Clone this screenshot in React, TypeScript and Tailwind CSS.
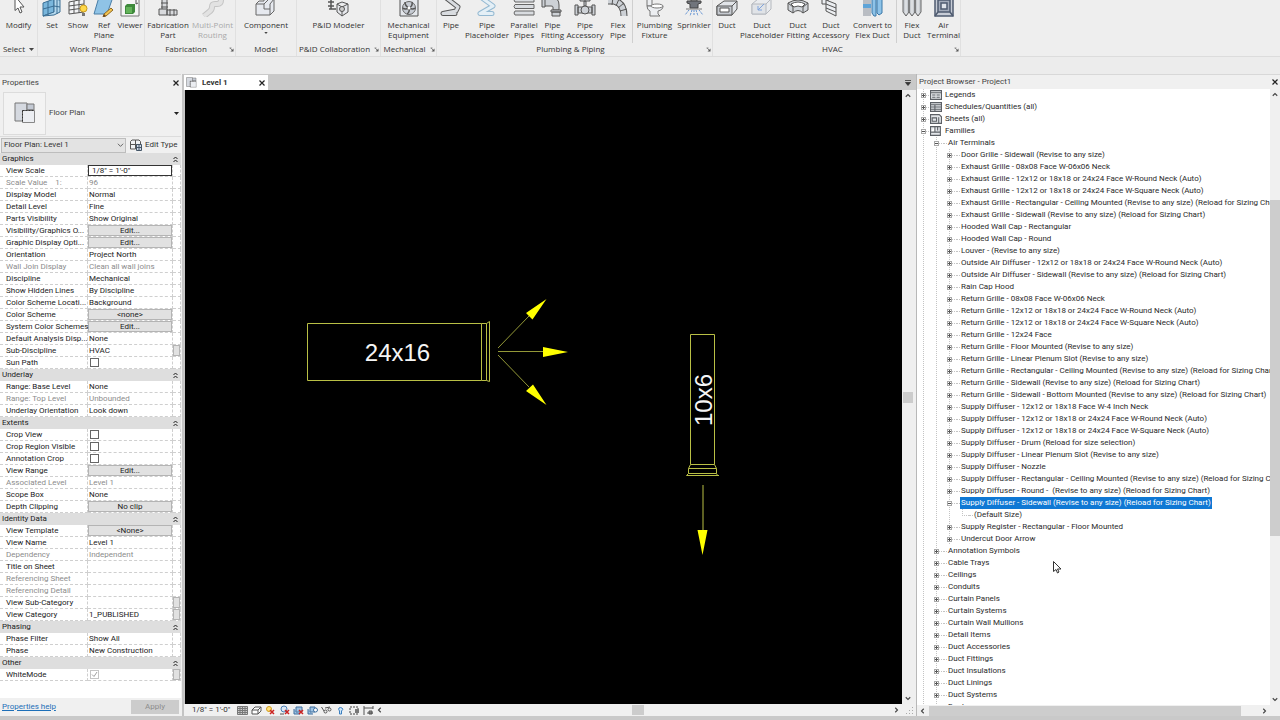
import React from "react";

/* ---------- Ribbon ---------- */

type IconName =
  | "cursor" | "set" | "show" | "refPlane" | "viewer" | "fabPart" | "multiPoint" | "component" | "pid"
  | "mech" | "pipe" | "pipeGhost" | "parallel" | "elbow" | "valve" | "flexPipe" | "toilet" | "sprinkler"
  | "duct" | "ductGhost" | "ductFitting" | "ductAccessory" | "convert" | "flexDuct" | "airTerminal";

const drawings: Record<IconName, React.ReactNode> = {
  cursor: <path d="M8 -4V10.500L11 8l2 5 2-1-2-5h4Z" fill="#fff" stroke="#555" />,
  set: (
    <g stroke="#3a6e94">
      <path d="M3 3 14-1v13L3 16Z" fill="#79b6dc" />
      <path d="M14-1l6 1v12l-6 3-11 1 11-4Z" fill="#b5d9ee" />
      <path d="M3 9l11-3 6 1M8 1v14M17 0v14" fill="none" />
    </g>
  ),
  show: (
    <g>
      <path d="M3 2 18-1v13L3 14Z" fill="#f3f4f6" stroke="#555" />
      <path d="M3 6l15-2M3 10l15-2M8 1v12M13 0v13" fill="none" stroke="#555" />
      <circle cx="17.500" cy="8.500" r="3.500" fill="#ffd84a" stroke="#c89a1c" />
      <path d="M16 13h3v3h-3Z" fill="#777" />
    </g>
  ),
  refPlane: (
    <g>
      <path d="M7-3h14l-6 17H2Z" fill="#8fc3e6" stroke="#4a7ea6" />
      <path d="M12 14 19 8l2 2-7 6-3 1Z" fill="#f4c34e" stroke="#8d6a27" />
      <path d="m12 14 2 2-3 1Z" fill="#6a4522" />
    </g>
  ),
  viewer: (
    <g>
      <path d="M3-2h18v18H3Z" fill="#f5f5f5" stroke="#777" />
      <path d="M7 6l2-2h8v8l-2 2H7Z" fill="#3f8a3c" />
      <path d="M8 7h6v6H8Z" fill="#63b359" />
      <path d="M18-2v6l2-1" stroke="#555" fill="none" />
    </g>
  ),
  fabPart: (
    <g stroke="#555" fill="#d8dadd">
      <path d="M6-2h5v12H6ZM5 3h7M5 7h7" />
      <path d="M3 9h8v6H3ZM11 10h10v5H11ZM14 9v7M18 9v7" />
    </g>
  ),
  multiPoint: (
    <g fill="none">
      <path d="M20-3v3q0 4-4 4h-2q-3 0-3 3t-3 5l-5 4" stroke="#c4c4c4" strokeWidth="6" />
      <path d="M20-3v3q0 4-4 4h-2q-3 0-3 3t-3 5l-5 4" stroke="#e2e2e2" strokeWidth="4" />
    </g>
  ),
  component: (
    <g stroke="#666">
      <path d="M2 4l3-3h5V-3h10v14l-4 4H2Z" fill="#e6e9ef" />
      <path d="M2 4h8l4-4M16 15V4l4-5M10 4v5l6 0" fill="none" />
    </g>
  ),
  pid: (
    <g fill="none" stroke="#555">
      <path d="M4-3v12M1 2h6M1 6h6M2 9h7" strokeWidth="1.500" />
      <path d="m10 4 5-2 6 2v8l-6 4-5-4ZM10 4l5 3 6-3M15 7v9" fill="#e6e8ec" />
      <circle cx="15" cy="9" r="2.500" fill="#ccc" />
    </g>
  ),
  mech: (
    <g>
      <path d="M3-2h18v18H3Z" fill="#e4e7ec" stroke="#555" />
      <circle cx="12" cy="8" r="6.500" fill="#c6cbd3" stroke="#666" />
      <path d="M12 8Q8 6 8 2M12 8q4-2 3-6M12 8q4 2 6 0M12 8q1 4-2 6M12 8q-4 2-6 0" fill="none" stroke="#555" strokeWidth="1.500" />
      <circle cx="12" cy="8" r="1.500" fill="#fff" />
    </g>
  ),
  pipe: (
    <g fill="none" strokeLinecap="round">
      <path d="M6-3 19 7 17 11 4 13.500h12" stroke="#555" strokeWidth="5" strokeLinejoin="round" />
      <path d="M6-3 19 7 17 11 4 13.500h12" stroke="#d9dce0" strokeWidth="3" strokeLinejoin="round" />
    </g>
  ),
  pipeGhost: (
    <g fill="none" strokeLinecap="round">
      <path d="M7-2 18 6 5 13.500h12" stroke="#94b9d2" strokeWidth="5" strokeLinejoin="round" />
      <path d="M7-2 18 6 5 13.500h12" stroke="#e4eff6" strokeWidth="3" strokeLinejoin="round" />
    </g>
  ),
  parallel: (
    <g stroke="#666" fill="#d9dce0">
      <path d="M3-2h19v4H3q-2-2 0-4ZM3 4.500h19v4H3q-2-2 0-4ZM3 11h19v4H3q-2-2 0-4Z" />
    </g>
  ),
  elbow: (
    <g stroke="#555" fill="#cdd1d6">
      <path d="M3-2h9q6 0 6 7v5h-6V7q0-1-2-1H3Z" />
      <path d="M1-3h3V7H1ZM10 10h10v2H10ZM11 12h8v4h-8Z" />
    </g>
  ),
  valve: (
    <g stroke="#555" fill="#cdd1d6">
      <path d="M7-1h10v2H7ZM11 1h2v5h-2Z" />
      <path d="M5 7h14v6H5ZM2 5h3v10H2ZM19 5h3v10h-3Z" />
      <circle cx="12" cy="10" r="4" />
    </g>
  ),
  flexPipe: (
    <g>
      <path d="M2 1h6q10 2 10 15" fill="none" stroke="#555" strokeWidth="7" />
      <path d="M2 1h6q10 2 10 15" fill="none" stroke="#cdd1d6" strokeWidth="5" />
      <path d="M7-3 6 5M13-1l-3 7M18 3l-6 5M21 9l-7 2" stroke="#555" />
    </g>
  ),
  toilet: (
    <g stroke="#777" fill="#eceef1">
      <path d="M4-3h5V6H4Z" />
      <path d="M4 6h16q0 4-5 5v3l2 2H7V11Q4 10 4 6Z" />
      <ellipse cx="14" cy="6" rx="6" ry="2" fill="#fff" />
    </g>
  ),
  sprinkler: (
    <g>
      <path d="M9-3h6v5H9Z" fill="#999" stroke="#444" />
      <path d="M5 1h14v2l-3 1v4H8V4L5 3Z" fill="#71757c" stroke="#444" />
      <path d="M4 9h16" stroke="#777" />
      <path d="M7 10 3 15M10 10l-2 6M12 10v6M14 10l2 6M17 10l4 5" stroke="#5c8ed1" strokeDasharray="2 1" />
    </g>
  ),
  duct: (
    <g stroke="#555">
      <path d="M2 6 9 1h13v8l-5 6H2Z" fill="#e1e4e8" />
      <path d="M2 6h15v9H2ZM17 6l5-5" fill="#c6cad0" />
      <path d="M5 8h9v4H5Z" fill="#fff" />
    </g>
  ),
  ductGhost: (
    <g stroke="#b4b8be">
      <path d="M2 4 8-1h13v10l-5 5H2Z" fill="#e9ebee" />
      <path d="M2 4h14v10H2ZM16 4l5-5" fill="#e0e3e7" />
      <path d="m8 10 6-6M8 6v4h4" stroke="#7fa3dc" fill="none" />
    </g>
  ),
  ductFitting: (
    <g stroke="#555">
      <path d="M2 3Q12-3 22 3v7l-5 3q-5-5-10 0l-5-3Z" fill="#d0d4d9" />
      <path d="M5 4q7-4 14 0l-3 3q-4-2-8 0Z" fill="#fff" />
      <path d="M2 3l5 4v6M22 3l-5 4v6" fill="none" />
    </g>
  ),
  ductAccessory: (
    <g stroke="#555" fill="#eceef1">
      <path d="M3-2h6v6H3Z" />
      <path d="M7 0 17 4v12L7 11ZM7 4l10 4M7 8l10 4" />
    </g>
  ),
  convert: (
    <g>
      <path d="M2-2h8v6H2ZM2 8h8v8H2Z" fill="#b9bdc3" />
      <path d="M2 4h8v4H2Z" fill="#5ea4d8" />
      <path d="M11-3v16l2 3h2V-1Zm5 0v16l2 2 3-2V-3Z" fill="#8ec3e8" stroke="#3b78a8" />
    </g>
  ),
  flexDuct: (
    <g fill="#c9cdd2" stroke="#666">
      <path d="M3-3v15l3 4 3-4V-3ZM9-3v15l3 4 3-4V-3ZM15-3v15l3 4 3-4V-3Z" />
      <path d="M6-3v17M12-3v17M18-3v17" stroke="#eef0f2" />
    </g>
  ),
  airTerminal: (
    <g fill="none" stroke="#4f5b70" strokeWidth="1.500">
      <path d="M3-3h18v19H3Z" fill="#c7ccd6" />
      <path d="M6 0h12v12H6Z" fill="#a3abba" />
      <path d="M9 3h6v6H9Z" fill="#dfe3ea" />
      <path d="m3 16 3-4M21 16l-3-4" />
    </g>
  ),
};

function RibbonIcon({ name }: { name: IconName }) {
  return (
    <svg viewBox="0 0 24 17" className="h-[17px] w-6 shrink-0" aria-hidden="true">
      {drawings[name]}
    </svg>
  );
}

type Tool = { icon: IconName; lines: string[]; w: string; disabled?: boolean; caret?: boolean; divider?: boolean };
type Group = { title: string; w: string; tools: Tool[]; launcher?: boolean; dropdown?: boolean };

const groups: Group[] = [
  { title: "Select", w: "w-[38px]", dropdown: true, tools: [{ icon: "cursor", lines: ["Modify"], w: "w-[37px]" }] },
  {
    title: "Work Plane",
    w: "w-[107px]",
    tools: [
      { icon: "set", lines: ["Set"], w: "w-[26px]" },
      { icon: "show", lines: ["Show"], w: "w-[26px]" },
      { icon: "refPlane", lines: ["Ref", "Plane"], w: "w-[26px]" },
      { icon: "viewer", lines: ["Viewer"], w: "w-[26px]" },
    ],
  },
  {
    title: "Fabrication",
    w: "w-[91px]",
    launcher: true,
    tools: [
      { icon: "fabPart", lines: ["Fabrication", "Part"], w: "w-[45px]" },
      { icon: "multiPoint", lines: ["Multi-Point", "Routing"], w: "w-[44px]", disabled: true },
    ],
  },
  { title: "Model", w: "w-[61px]", tools: [{ icon: "component", lines: ["Component"], w: "w-[50px]", caret: true }] },
  { title: "P&ID Collaboration", w: "w-[84px]", launcher: true, tools: [{ icon: "pid", lines: ["P&ID Modeler"], w: "w-[60px]" }] },
  { title: "Mechanical", w: "w-[56px]", launcher: true, tools: [{ icon: "mech", lines: ["Mechanical", "Equipment"], w: "w-[48px]" }] },
  {
    title: "Plumbing & Piping",
    w: "w-[276px]",
    launcher: true,
    tools: [
      { icon: "pipe", lines: ["Pipe"], w: "w-[28px]" },
      { icon: "pipeGhost", lines: ["Pipe", "Placeholder"], w: "w-[44px]" },
      { icon: "parallel", lines: ["Parallel", "Pipes"], w: "w-[30px]" },
      { icon: "elbow", lines: ["Pipe", "Fitting"], w: "w-[27px]" },
      { icon: "valve", lines: ["Pipe", "Accessory"], w: "w-[38px]" },
      { icon: "flexPipe", lines: ["Flex", "Pipe"], w: "w-[28px]" },
      { icon: "toilet", lines: ["Plumbing", "Fixture"], w: "w-[44px]", divider: true },
      { icon: "sprinkler", lines: ["Sprinkler"], w: "w-[36px]" },
    ],
  },
  {
    title: "HVAC",
    w: "w-[248px]",
    launcher: true,
    tools: [
      { icon: "duct", lines: ["Duct"], w: "w-[27px]" },
      { icon: "ductGhost", lines: ["Duct", "Placeholder"], w: "w-[43px]" },
      { icon: "ductFitting", lines: ["Duct", "Fitting"], w: "w-[29px]" },
      { icon: "ductAccessory", lines: ["Duct", "Accessory"], w: "w-[37px]" },
      { icon: "convert", lines: ["Convert to", "Flex Duct"], w: "w-[46px]" },
      { icon: "flexDuct", lines: ["Flex", "Duct"], w: "w-[32px]", divider: true },
      { icon: "airTerminal", lines: ["Air", "Terminal"], w: "w-[32px]" },
    ],
  },
];

function ToolButton({ tool }: { tool: Tool }) {
  return (
    <button
      type="button"
      disabled={tool.disabled}
      className={`flex h-[43px] shrink-0 flex-col items-center gap-[3px] leading-[10px] whitespace-nowrap ${tool.w} ${
        tool.disabled ? "text-[#a9a9a9]" : "text-[#333]"
      } ${tool.divider ? "border-l border-[#cfcfcf]" : ""}`}
    >
      <RibbonIcon name={tool.icon} />
      <span className="flex flex-col items-center">
        {tool.lines.map((l) => (
          <span key={l}>{l}</span>
        ))}
        {tool.caret && (
          <svg viewBox="0 0 5 3" className="mt-[2px] h-[2px] w-[4px]" aria-hidden="true">
            <path d="M0 0h5L2.500 3Z" fill="#444" />
          </svg>
        )}
      </span>
    </button>
  );
}

function Launcher({ title }: { title: string }) {
  return (
    <button type="button" aria-label={`${title} settings`} className="flex w-[8px] justify-center">
      <svg viewBox="0 0 5 5" className="h-[5px] w-[5px]" aria-hidden="true">
        <path d="M0.500 1h2M1 1l2 2" stroke="#888" fill="none" />
        <path d="M4.500 1.500v3H1.500Z" fill="#555" />
      </svg>
    </button>
  );
}

function Ribbon() {
  return (
    <header className="flex h-[57px] shrink-0 overflow-hidden border-b border-[#dcdcdc] bg-[#eeeeee] font-['Open_Sans','Noto_Sans',sans-serif]">
      {groups.map((g) => (
        <section key={g.title} aria-label={g.title} className={`flex shrink-0 flex-col border-r border-[#e0e0e0] ${g.w}`}>
          <div className="flex justify-center">
            {g.tools.map((t) => (
              <ToolButton key={t.lines.join(" ")} tool={t} />
            ))}
          </div>
          <div className="flex h-[12px] items-center text-[#333]">
            <span className="flex flex-1 items-center justify-center gap-1 whitespace-nowrap">
              {g.title}
              {g.dropdown && (
                <svg viewBox="0 0 5 3" className="h-[3px] w-[5px]" aria-hidden="true">
                  <path d="M0 0h5L2.500 3Z" fill="#444" />
                </svg>
              )}
            </span>
            {g.launcher && <Launcher title={g.title} />}
          </div>
        </section>
      ))}
    </header>
  );
}

/* ---------- Shared bits ---------- */

function CloseButton({ label }: { label: string }) {
  return (
    <button type="button" aria-label={label} className="flex h-[10px] w-[10px] items-center justify-center">
      <svg viewBox="0 0 6 6" className="h-[6px] w-[6px]" aria-hidden="true">
        <path d="m0.500 0.500 5 5M5.500 0.500l-5 5" stroke="#222" strokeWidth="1.200" />
      </svg>
    </button>
  );
}

const arrows = { up: "M1 5 4 2l3 3", down: "M1 3l3 3 3-3", left: "M5 1 2 4l3 3", right: "M3 1l3 3-3 3" };

function ScrollArrow({ dir }: { dir: keyof typeof arrows }) {
  return (
    <button type="button" aria-label={`Scroll ${dir}`} className="flex h-[12px] w-[12px] shrink-0 items-center justify-center">
      <svg viewBox="0 0 8 8" className="h-[6px] w-[6px]" aria-hidden="true">
        <path d={arrows[dir]} stroke="#444" strokeWidth="1.500" fill="none" />
      </svg>
    </button>
  );
}

function FloorPlanIcon({ className }: { className: string }) {
  return (
    <svg viewBox="0 0 22 22" className={className} aria-hidden="true">
      <path d="M1 1h12v18H1Z" fill="#d5d9e0" stroke="#777" />
      <path d="M13 2h7v6h-7ZM13 8h6" fill="#c3c9d3" stroke="#777" />
      <path d="M8.500 8.500h12v12h-12Z" fill="#eceef2" stroke="#888" />
      <path d="M8.500 8.500h12M8.500 8.500v12" stroke="#333" strokeDasharray="2 1" />
    </svg>
  );
}

/* ---------- Properties palette ---------- */

type Prop = { n: string; v?: string; kind?: "button" | "check" | "input"; dim?: boolean; more?: boolean; checked?: boolean };

const sections: { title: string; rows: Prop[] }[] = [
  {
    title: "Graphics",
    rows: [
      { n: "View Scale", v: "1/8\" = 1'-0\"", kind: "input" },
      { n: "Scale Value    1:", v: "96", dim: true },
      { n: "Display Model", v: "Normal" },
      { n: "Detail Level", v: "Fine" },
      { n: "Parts Visibility", v: "Show Original" },
      { n: "Visibility/Graphics O...", v: "Edit...", kind: "button" },
      { n: "Graphic Display Opti...", v: "Edit...", kind: "button" },
      { n: "Orientation", v: "Project North" },
      { n: "Wall Join Display", v: "Clean all wall joins", dim: true },
      { n: "Discipline", v: "Mechanical" },
      { n: "Show Hidden Lines", v: "By Discipline" },
      { n: "Color Scheme Locati...", v: "Background" },
      { n: "Color Scheme", v: "<none>", kind: "button" },
      { n: "System Color Schemes", v: "Edit...", kind: "button" },
      { n: "Default Analysis Disp...", v: "None" },
      { n: "Sub-Discipline", v: "HVAC", more: true },
      { n: "Sun Path", kind: "check" },
    ],
  },
  {
    title: "Underlay",
    rows: [
      { n: "Range: Base Level", v: "None" },
      { n: "Range: Top Level", v: "Unbounded", dim: true },
      { n: "Underlay Orientation", v: "Look down" },
    ],
  },
  {
    title: "Extents",
    rows: [
      { n: "Crop View", kind: "check" },
      { n: "Crop Region Visible", kind: "check" },
      { n: "Annotation Crop", kind: "check" },
      { n: "View Range", v: "Edit...", kind: "button" },
      { n: "Associated Level", v: "Level 1", dim: true },
      { n: "Scope Box", v: "None" },
      { n: "Depth Clipping", v: "No clip", kind: "button" },
    ],
  },
  {
    title: "Identity Data",
    rows: [
      { n: "View Template", v: "<None>", kind: "button" },
      { n: "View Name", v: "Level 1" },
      { n: "Dependency", v: "Independent", dim: true },
      { n: "Title on Sheet" },
      { n: "Referencing Sheet", dim: true },
      { n: "Referencing Detail", dim: true },
      { n: "View Sub-Category", more: true },
      { n: "View Category", v: "1_PUBLISHED", more: true },
    ],
  },
  {
    title: "Phasing",
    rows: [
      { n: "Phase Filter", v: "Show All" },
      { n: "Phase", v: "New Construction" },
    ],
  },
  { title: "Other", rows: [{ n: "WhiteMode", kind: "check", checked: true, more: true }] },
];

function PropValue({ p }: { p: Prop }) {
  if (p.kind === "button")
    return (
      <button
        type="button"
        aria-label={`${p.n}: ${p.v}`}
        className="block h-[11px] w-full border border-[#b4b4b4] bg-[#e1e1e1] text-center leading-[9px]"
      >
        {p.v}
      </button>
    );
  if (p.kind === "check")
    return (
      <span className="flex h-[11px] items-center pl-[2px]">
        <input
          type="checkbox"
          aria-label={p.n}
          defaultChecked={p.checked}
          disabled={p.checked}
          className="h-[9px] w-[9px] appearance-none border border-[#666] bg-white disabled:border-[#c4c4c4]"
        />
        {p.checked && (
          <svg viewBox="0 0 7 7" className="-ml-2 h-[7px] w-[7px]" aria-hidden="true">
            <path d="M1 3.500 3 5.500 6 1" stroke="#a0a0a0" fill="none" />
          </svg>
        )}
      </span>
    );
  if (p.kind === "input")
    return (
      <input
        aria-label={p.n}
        defaultValue={p.v}
        className="block h-[11px] w-full border border-[#333] bg-white px-[3px] leading-[9px] outline-none"
      />
    );
  return <span className="block h-[11px] overflow-hidden pl-[1px] leading-[11px] whitespace-nowrap">{p.v}</span>;
}

function Properties() {
  return (
    <aside className="flex w-[184px] shrink-0 flex-col border-r-2 border-[#c4c4c4] bg-[#f0f0f0] pr-[1px]">
      <div className="flex h-4 shrink-0 items-center justify-between border-t border-[#d8d8d8] pl-[2px] text-[#444]">
        <h2>Properties</h2>
        <CloseButton label="Close properties" />
      </div>
      <button type="button" className="flex h-[47px] shrink-0 items-center border-b border-[#dcdcdc] text-left text-[#444]">
        <span className="ml-[3px] flex h-[43px] w-[43px] items-center justify-center border border-[#dcdcdc] bg-[#f3f3f3]">
          <FloorPlanIcon className="h-[22px] w-[22px]" />
        </span>
        <span className="ml-[3px] flex-1">Floor Plan</span>
        <svg viewBox="0 0 5 3" className="mr-[2px] h-[3px] w-[5px]" aria-hidden="true">
          <path d="M0 0h5L2.500 3Z" fill="#222" />
        </svg>
      </button>
      <div className="flex h-4 shrink-0 items-center text-[#333]">
        <span className="relative ml-[1px] flex h-[15px] w-[125px]">
          <select aria-label="View" className="w-full appearance-none border border-[#bdbdbd] bg-[#e3e3e3] px-[2px] leading-[12px]">
            <option>Floor Plan: Level 1</option>
          </select>
          <svg viewBox="0 0 8 8" className="pointer-events-none absolute top-1 right-[2px] h-[7px] w-[7px]" aria-hidden="true">
            <path d="M1 2l3 3 3-3" stroke="#555" fill="none" />
          </svg>
        </span>
        <button type="button" className="ml-1 flex items-center gap-[3px] whitespace-nowrap">
          <svg viewBox="0 0 12 12" className="h-[12px] w-[12px]" aria-hidden="true">
            <path d="M0.500 2.500 2 1h3.500v9H0.500ZM0.500 5.500h5M5.500 1H9l1.500 1.500v3h-5" fill="#f0f2f5" stroke="#555" />
            <path d="M6.500 5.500h5v6h-5ZM6.500 8.500h5M9 6v5" fill="#cfd9e8" stroke="#456" />
          </svg>
          Edit Type
        </button>
      </div>
      <div className="min-h-0 flex-1 overflow-hidden bg-white">
        <table className="w-full table-fixed border-separate border-spacing-0 text-[#222]">
          <colgroup>
            <col />
            <col className="w-[85px]" />
            <col className="w-[8px]" />
          </colgroup>
          {sections.map((s) => (
            <tbody key={s.title}>
              <tr className="h-[12px] bg-[#dedede]">
                <th colSpan={2} scope="rowgroup" className="p-0 pl-[2px] text-left leading-[12px] font-normal">
                  {s.title}
                </th>
                <td className="p-0">
                  <button type="button" aria-label={`Collapse ${s.title}`} className="flex h-[11px] items-center">
                    <svg viewBox="0 0 5 7" className="h-[7px] w-[5px]" aria-hidden="true">
                      <path d="M0.500 3 2.500 1l2 2M0.500 6l2-2 2 2" stroke="#222" fill="none" />
                    </svg>
                  </button>
                </td>
              </tr>
              {s.rows.map((p) => (
                <tr key={p.n} className={`h-[12px] ${p.dim ? "text-[#8c8c8c]" : ""}`}>
                  <th
                    scope="row"
                    className="border-r border-b border-dashed border-[#cfcfcf] p-0 pl-[6px] text-left leading-[11px] font-normal whitespace-pre"
                  >
                    {p.n}
                  </th>
                  <td className="border-r border-b border-dashed border-[#cfcfcf] p-0">
                    <PropValue p={p} />
                  </td>
                  <td className="border-r border-b border-dashed border-[#cfcfcf] p-0">
                    {p.more && (
                      <button
                        type="button"
                        aria-label={`Associate ${p.n}`}
                        className="block h-[11px] w-[7px] border border-[#b4b4b4] bg-[#e1e1e1]"
                      />
                    )}
                  </td>
                </tr>
              ))}
            </tbody>
          ))}
        </table>
      </div>
      <div className="flex h-[18px] shrink-0 items-center justify-between px-[2px]">
        <a href="#help" className="text-[#1d6fb8] underline">
          Properties help
        </a>
        <button type="button" disabled className="h-[14px] w-[48px] bg-[#cccccc] leading-[14px] text-[#8c8c8c]">
          Apply
        </button>
      </div>
    </aside>
  );
}

/* ---------- Drawing view ---------- */

function DrawingCanvas() {
  return (
    <svg
      viewBox="0 0 717 614"
      preserveAspectRatio="xMidYMid slice"
      className="min-h-0 min-w-0 flex-1 bg-black"
      role="img"
      aria-label="Level 1 floor plan"
    >
      <g fill="none" stroke="#b9bf45">
        <path d="M122.500 233.500h174v57h-174Z" />
        <path d="M296.500 233.500h5v57h-5M301.500 233.500l3-2v60l-3-1" />
        <path d="M313 258l31-32M313 261.500h46M313 265l31 32" strokeWidth="0.800" />
        <path d="M505.500 244.500h24v130h-24Z" />
        <path d="M505.500 374.500l-2 4v5h28v-5l-2-4M503.500 378.500h28M503.500 383.500l-2 2h31l-1-2M502 385.500h32M518 395v50" />
      </g>
      <path
        d="M361.500 209 341 223l6.500 6.500ZM383 262l-25-5v10ZM361.500 315 348 294.500l-7 6.500ZM517.500 465l5-25h-10Z"
        fill="#ffff00"
      />
      <g fill="#f5f5f5" fontFamily="'Liberation Sans Narrow', 'Arial Narrow', 'Liberation Sans', sans-serif" fontSize="24" textAnchor="middle">
        <text x="212.500" y="271">24x16</text>
        <text transform="translate(527 310) rotate(-90)">10x6</text>
      </g>
    </svg>
  );
}

const viewTools: { label: string; art: React.ReactNode }[] = [
  { label: "Detail level", art: <path d="M0.500 1.500h10v8h-10ZM0.500 3.500h10M0.500 5.500h10M0.500 7.500h10M3 2v8M5.500 2v8M8 2v8" fill="#ccc" stroke="#777" /> },
  { label: "Visual style", art: <path d="m1 5 3-3h6v4L7 9H1ZM1 5h6v4M7 5l3-3" fill="#fff" stroke="#555" /> },
  { label: "Sun path", art: <g><circle cx="4" cy="4" r="2.500" fill="#ffe27a" stroke="#d09a1a" /><path d="m5 5 4 4M9 5 5 9" stroke="#c22" strokeWidth="1.500" /></g> },
  { label: "Shadows", art: <g><circle cx="5" cy="4" r="3" fill="#dce9f5" stroke="#4b7fb5" /><path d="M1 9h4" stroke="#555" /><path d="m6 5 4 4M10 5 6 9" stroke="#c22" strokeWidth="1.500" /></g> },
  { label: "Crop view", art: <g><path d="M1 4v5h6M3 2h6v5H3Z" fill="#9fc3e3" stroke="#3f6f9f" /><path d="m6 5 4 4M10 5 6 9" stroke="#c22" strokeWidth="1.500" /></g> },
  { label: "Show crop region", art: <g><path d="M1 4v5h5M3 2h5v5H3Z" fill="#9fc3e3" stroke="#3f6f9f" /><circle cx="8.500" cy="5" r="2" fill="#fff" stroke="#3f6f9f" /></g> },
  { label: "Temporary hide", art: <g fill="none" stroke="#555"><path d="M0.500 2 3 6M4 3l5-1" /><circle cx="4.500" cy="6.500" r="1.500" /><circle cx="8.500" cy="4.500" r="1.500" /></g> },
  { label: "Reveal hidden elements", art: <path d="M4.500 6Q3 4 4 3t3 0T6.500 6v3h-2Z" fill="#cfe6f8" stroke="#3a7fc0" /> },
  { label: "Temporary view properties", art: <g><path d="M1 2h8v7H1Z" fill="none" stroke="#444" strokeDasharray="2 1" /><path d="M6 4h4v4H6Z" fill="#777" /></g> },
  { label: "Reveal constraints", art: <path d="M1 1v9M1 3h9M10 1v3M4 8h6M6 6h3v3H6Z" fill="#999" stroke="#555" /> },
];

function DrawingView() {
  return (
    <main className="flex min-w-0 flex-1 flex-col">
      <div className="flex h-4 shrink-0 items-stretch bg-[#c9c9c9] pt-[1px]">
        <div className="flex w-[84px] items-center bg-white pr-[1px] pl-[2px] font-bold text-[#333]">
          <FloorPlanIcon className="mr-[5px] h-[11px] w-[11px]" />
          <span className="flex-1">Level 1</span>
          <CloseButton label="Close Level 1" />
        </div>
        <button type="button" aria-label="Open views" className="mr-[3px] ml-auto flex w-[8px] items-center">
          <svg viewBox="0 0 6 6" className="h-[6px] w-[6px]" aria-hidden="true">
            <path d="M0 0.500h6M0.500 2.500h5L3 5.500Z" stroke="#333" fill="#333" strokeWidth="0.800" />
          </svg>
        </button>
      </div>
      <div className="flex min-h-0 flex-1 pl-[1px]">
        <DrawingCanvas />
        <div className="flex w-[14px] shrink-0 flex-col items-start bg-[#efefef]">
          <ScrollArrow dir="up" />
          <div className="flex w-[12px] flex-1 items-center justify-center">
            <div className="h-[11px] w-[10px] bg-[#cccccc]" />
          </div>
          <ScrollArrow dir="down" />
        </div>
      </div>
      <div className="flex h-[12px] shrink-0 items-center bg-[#f0f0f0] pl-2 text-[#333]">
        <button type="button" className="w-[45px] text-left whitespace-nowrap">{"1/8\" = 1'-0\""}</button>
        <div className="flex gap-[3px]">
          {viewTools.map((t) => (
            <button key={t.label} type="button" aria-label={t.label}>
              <svg viewBox="0 0 11 11" className="h-[11px] w-[11px]" aria-hidden="true">
                {t.art}
              </svg>
            </button>
          ))}
        </div>
        <ScrollArrow dir="left" />
        <div className="flex flex-1 justify-center">
          <div className="h-[10px] w-[12px] bg-[#cccccc]" />
        </div>
        <ScrollArrow dir="right" />
        <svg viewBox="0 0 8 8" className="mr-[2px] ml-[4px] h-2 w-2" aria-hidden="true">
          <path d="M6 1h1v1H6ZM6 4h1v1H6ZM3 4h1v1H3ZM0 7h1v1H0ZM3 7h1v1H3ZM6 7h1v1H6Z" fill="#aaa" />
        </svg>
      </div>
    </main>
  );
}

/* ---------- Project browser ---------- */

type NodeIcon = "legend" | "schedule" | "sheet" | "family";
type TreeNode = { t: string; level: number; open?: boolean; icon?: NodeIcon; selected?: boolean; leaf?: boolean };

const terminals = [
  "Door Grille - Sidewall (Revise to any size)",
  "Exhaust Grille - 08x08 Face W-06x06 Neck",
  "Exhaust Grille - 12x12 or 18x18 or 24x24 Face W-Round Neck (Auto)",
  "Exhaust Grille - 12x12 or 18x18 or 24x24 Face W-Square Neck (Auto)",
  "Exhaust Grille - Rectangular - Ceiling Mounted (Revise to any size) (Reload for Sizing Chart)",
  "Exhaust Grille - Sidewall (Revise to any size) (Reload for Sizing Chart)",
  "Hooded Wall Cap - Rectangular",
  "Hooded Wall Cap - Round",
  "Louver - (Revise to any size)",
  "Outside Air Diffuser - 12x12 or 18x18 or 24x24 Face W-Round Neck (Auto)",
  "Outside Air Diffuser - Sidewall (Revise to any size) (Reload for Sizing Chart)",
  "Rain Cap Hood",
  "Return Grille - 08x08 Face W-06x06 Neck",
  "Return Grille - 12x12 or 18x18 or 24x24 Face W-Round Neck (Auto)",
  "Return Grille - 12x12 or 18x18 or 24x24 Face W-Square Neck (Auto)",
  "Return Grille - 12x24 Face",
  "Return Grille - Floor Mounted (Revise to any size)",
  "Return Grille - Linear Plenum Slot (Revise to any size)",
  "Return Grille - Rectangular - Ceiling Mounted (Revise to any size) (Reload for Sizing Chart)",
  "Return Grille - Sidewall (Revise to any size) (Reload for Sizing Chart)",
  "Return Grille - Sidewall - Bottom Mounted (Revise to any size) (Reload for Sizing Chart)",
  "Supply Diffuser - 12x12 or 18x18 Face W-4 Inch Neck",
  "Supply Diffuser - 12x12 or 18x18 or 24x24 Face W-Round Neck (Auto)",
  "Supply Diffuser - 12x12 or 18x18 or 24x24 Face W-Square Neck (Auto)",
  "Supply Diffuser - Drum (Reload for size selection)",
  "Supply Diffuser - Linear Plenum Slot (Revise to any size)",
  "Supply Diffuser - Nozzle",
  "Supply Diffuser - Rectangular - Ceiling Mounted (Revise to any size) (Reload for Sizing Chart)",
  "Supply Diffuser - Round -  (Revise to any size) (Reload for Sizing Chart)",
];

const categories = [
  "Annotation Symbols", "Cable Trays", "Ceilings", "Conduits", "Curtain Panels", "Curtain Systems",
  "Curtain Wall Mullions", "Detail Items", "Duct Accessories", "Duct Fittings", "Duct Insulations",
  "Duct Linings", "Duct Systems", "Ducts",
];

const tree: TreeNode[] = [
  { t: "Legends", level: 0, icon: "legend" },
  { t: "Schedules/Quantities (all)", level: 0, icon: "schedule" },
  { t: "Sheets (all)", level: 0, icon: "sheet" },
  { t: "Families", level: 0, icon: "family", open: true },
  { t: "Air Terminals", level: 1, open: true },
  ...terminals.map((t) => ({ t, level: 2 })),
  { t: "Supply Diffuser - Sidewall (Revise to any size) (Reload for Sizing Chart)", level: 2, open: true, selected: true },
  { t: "(Default Size)", level: 3, leaf: true },
  { t: "Supply Register - Rectangular - Floor Mounted", level: 2 },
  { t: "Undercut Door Arrow", level: 2 },
  ...categories.map((t) => ({ t, level: 1 })),
];

const nodeArt: Record<NodeIcon, React.ReactNode> = {
  legend: <path d="M0.500 1.500h10v8h-10ZM0.500 3.500h10M2 5.500h3M2 7.500h3M6 5.500h3M6 7.500h3" />,
  schedule: <path d="M0.500 1.500h10v8h-10ZM0.500 3.500h10M0.500 5.500h10M0.500 7.500h10M4.500 3v7" />,
  sheet: <path d="M0.500 1.500h8l2 2v6h-10ZM2 4.500h4v3H2ZM8 4v5" />,
  family: <path d="M0.500 1.500h9v8h-9ZM0.500 6.500h4v-5M4.500 6.500h5M7 2v3" />,
};

function Guide({ kind }: { kind: "line" | "plus" | "minus" | "corner" }) {
  const dots = { stroke: "#c4c4c4", strokeDasharray: "1 1", fill: "none" };
  return (
    <svg viewBox="0 0 13 12" className="h-[12px] w-[13px] shrink-0" shapeRendering="crispEdges" aria-hidden="true">
      <path d={kind === "corner" ? "M6.500 0v6.500H13" : "M6.500 0v12"} {...dots} />
      {(kind === "plus" || kind === "minus") && (
        <g>
          <path d="M9 6.500h4" {...dots} />
          <path d="M4.500 4.500h4v4h-4Z" fill="#fff" stroke="#a8a8a8" />
          <path d={kind === "plus" ? "M5 6.500h3M6.500 5v3" : "M5 6.500h3"} stroke="#555" />
        </g>
      )}
    </svg>
  );
}

function TreeRow({ node }: { node: TreeNode }) {
  return (
    <li className="flex h-[12px] items-center whitespace-pre">
      {Array.from({ length: node.level }, (_, i) => (
        <Guide key={i} kind="line" />
      ))}
      <Guide kind={node.leaf ? "corner" : node.open ? "minus" : "plus"} />
      {node.icon ? (
        <svg viewBox="0 0 11 11" className="mr-[2px] h-[12px] w-[12px] shrink-0" fill="#e3e6ea" stroke="#5c6066" aria-hidden="true">
          {nodeArt[node.icon]}
        </svg>
      ) : (
        <span className="mt-[1px] w-1 shrink-0 border-t border-dotted border-[#c4c4c4]" />
      )}
      <span className={`h-[12px] px-[1px] leading-[12px] ${node.selected ? "bg-[#0f78d4] text-white" : ""}`}>{node.t}</span>
    </li>
  );
}

function ProjectBrowser() {
  return (
    <aside className="flex w-[364px] shrink-0 flex-col border-l border-[#b8b8b8] bg-[#f0f0f0]">
      <div className="flex h-[15px] shrink-0 items-center justify-between border-t border-[#d8d8d8] pl-[2px] text-[#444]">
        <h2>Project Browser - Project1</h2>
        <CloseButton label="Close project browser" />
      </div>
      <div className="flex min-h-0 flex-1">
        <ul className="min-w-0 flex-1 overflow-hidden bg-white text-[#2a2a2a]">
          {tree.map((n) => (
            <TreeRow key={n.t} node={n} />
          ))}
        </ul>
        <div className="flex w-[10px] shrink-0 flex-col items-center">
          <ScrollArrow dir="up" />
          <div className="flex w-full flex-1 flex-col">
            <div className="flex-[17]" />
            <div className="flex-[58] bg-[#cdcdcd]" />
            <div className="flex-[27]" />
          </div>
          <ScrollArrow dir="down" />
        </div>
      </div>
      <div className="flex h-[11px] shrink-0 items-center">
        <ScrollArrow dir="left" />
        <div className="h-[10px] flex-1 bg-[#cdcdcd]" />
        <div className="w-[17px]" />
        <ScrollArrow dir="right" />
        <div className="w-[10px]" />
      </div>
    </aside>
  );
}

export default function App() {
  return (
    <div className="relative flex h-screen flex-col overflow-hidden bg-[#c9c9c9] font-['Roboto','Noto_Sans',sans-serif] text-[8px] leading-[12px]">
      <Ribbon />
      <div className="h-[17px] shrink-0 bg-[#ececec]" />
      <div className="flex min-h-0 flex-1">
        <Properties />
        <DrawingView />
        <ProjectBrowser />
      </div>
      <div className="h-1 shrink-0" />
      <svg viewBox="0 0 9 13" className="pointer-events-none absolute top-[561px] left-[1053px] h-[13px] w-[9px]" aria-hidden="true">
        <path d="M0.500 0.500v10l2.500-2 1.500 3.500 1.500-1-1.500-3H8Z" fill="#fff" stroke="#333" />
      </svg>
    </div>
  );
}
